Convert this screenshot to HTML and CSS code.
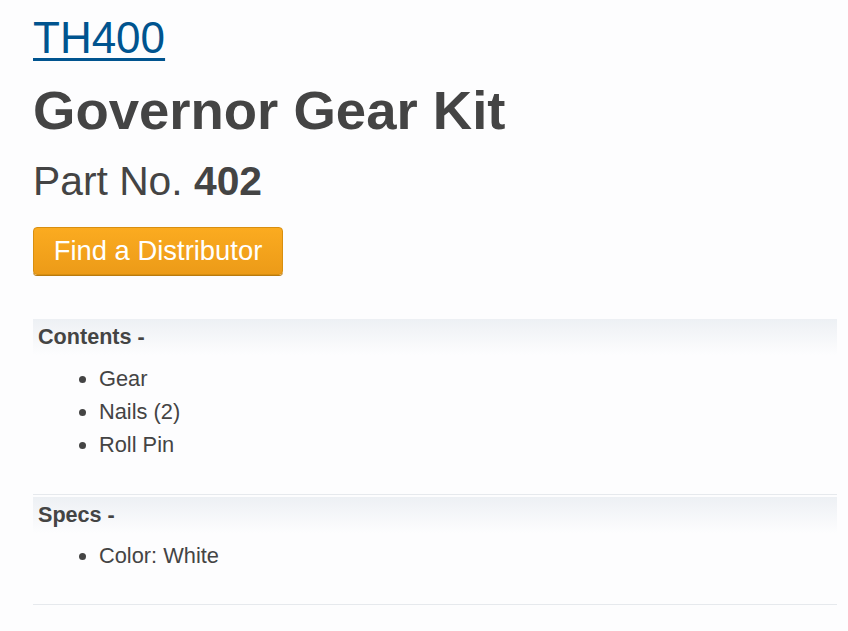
FILE: index.html
```html
<!DOCTYPE html>
<html lang="en">
<head>
<meta charset="utf-8">
<title>Governor Gear Kit</title>
<link rel="stylesheet" href="styles.css">
</head>
<body>
<div class="page">
  <div class="series"><a href="#">TH400</a></div>
  <h1 class="title">Governor Gear Kit</h1>
  <div class="part">Part No. <strong>402</strong></div>
  <a class="btn" href="#">Find a Distributor</a>

  <div class="section contents">
    <div class="section-head">Contents -</div>
    <ul class="section-list">
      <li>Gear</li>
      <li>Nails (2)</li>
      <li>Roll Pin</li>
    </ul>
  </div>

  <div class="section specs">
    <div class="section-head">Specs -</div>
    <ul class="section-list">
      <li>Color: White</li>
    </ul>
  </div>
</div>
</body>
</html>
```

FILE: styles.css
```css
html, body {
  margin: 0;
  padding: 0;
  background: #fdfdfe;
}

body {
  font-family: "Liberation Sans", Arial, sans-serif;
  color: #444444;
}

.page {
  padding: 13px 11px 0 33px;
}

.series {
  font-size: 44px;
  line-height: 50px;
}

.series a {
  color: #00548f;
  text-decoration: underline;
  text-decoration-thickness: 3px;
  text-underline-offset: 5px;
}

.title {
  margin: 18px 0 0;
  font-size: 54.5px;
  line-height: 60px;
  font-weight: bold;
  color: #444444;
}

.part {
  margin-top: 17px;
  font-size: 40.8px;
  line-height: 46px;
}

.part strong {
  font-weight: bold;
}

.btn {
  display: block;
  box-sizing: border-box;
  width: 250px;
  height: 48px;
  margin-top: 23px;
  border: 1px solid #d88f10;
  border-radius: 4px;
  background: linear-gradient(#fbab20, #ec9b18);
  box-shadow: 0 1px 0 #b87a10;
  color: #ffffff;
  font-size: 27.4px;
  line-height: 45px;
  text-align: center;
  text-decoration: none;
}

.section {
  border-bottom: 1px solid #e6e9ed;
}

.contents {
  margin-top: 44px;
}

.section-head {
  padding-left: 5px;
  height: 36px;
  line-height: 36px;
  font-size: 21.6px;
  font-weight: bold;
  background: linear-gradient(#edf0f4, #fdfdfe);
}

.section-list {
  margin: 7px 0 33px;
  padding-left: 66px;
  font-size: 21.8px;
  line-height: 33px;
}

.specs .section-head {
  margin-top: 2px;
}

.specs .section-list {
  margin: 6px 0 32px;
}
```
